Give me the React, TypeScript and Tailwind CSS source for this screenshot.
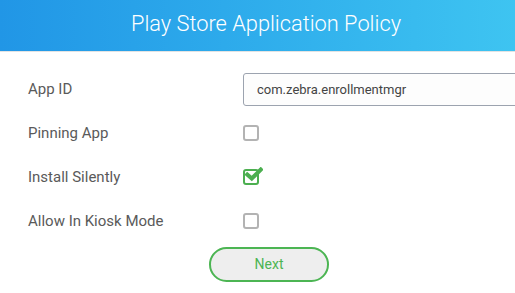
import React, { useState } from "react";

const font = { fontFamily: "Roboto, 'Liberation Sans', sans-serif" };

type CheckProps = {
  checked: boolean;
  onChange: () => void;
};

const Check: React.FC<CheckProps> = ({ checked, onChange }) => (
  <button
    type="button"
    onClick={onChange}
    className="relative h-[16px] w-[16px] cursor-pointer"
  >
    <span
      className={`block h-[16px] w-[16px] rounded-[3px] border-2 ${
        checked ? "border-[#4caf50]" : "border-[#b3b3b3]"
      }`}
    />
    {checked && (
      <svg
        viewBox="0 0 20 16"
        className="absolute left-[2px] top-[-2px] h-[15px] w-[18px]"
      >
        <path
          d="M2.5 8 L7.5 12.5 L17.5 2.5"
          fill="none"
          stroke="#4caf50"
          strokeWidth="4.5"
          strokeLinecap="square"
        />
      </svg>
    )}
  </button>
);

type RowProps = {
  label: string;
  children: React.ReactNode;
  height?: string;
};

const Row: React.FC<RowProps> = ({ label, children, height = "h-[44px]" }) => (
  <div className={`flex items-center ${height}`}>
    <span className="w-[215px] shrink-0 text-[15px] text-[#5a5a5a]">{label}</span>
    {children}
  </div>
);

export default function App() {
  const [pinning, setPinning] = useState(false);
  const [silent, setSilent] = useState(true);
  const [kiosk, setKiosk] = useState(false);

  return (
    <div className="h-[293px] w-[515px] overflow-hidden bg-white" style={font}>
      <div className="flex h-[52px] items-center justify-center border-b border-[#e3e3e3] bg-gradient-to-r from-[#2196e6] to-[#3ec4f1] pb-[2px] pl-[17px]">
        <h1 className="text-[21.8px] font-light text-white">
          Play Store Application Policy
        </h1>
      </div>
      <div className="pl-[28px]">
        <div className="mt-[21px]">
          <Row label="App ID" height="h-[33px]">
            <input
              defaultValue="com.zebra.enrollmentmgr"
              className="h-[33px] w-[300px] shrink-0 rounded-[3px] border border-[#9ca3af] bg-[#fdfdfd] px-[13px] text-[13px] text-[#444] outline-none"
            />
          </Row>
        </div>
        <div className="mt-[5px]">
          <Row label="Pinning App">
            <Check checked={pinning} onChange={() => setPinning(!pinning)} />
          </Row>
          <Row label="Install Silently">
            <Check checked={silent} onChange={() => setSilent(!silent)} />
          </Row>
          <Row label="Allow In Kiosk Mode">
            <Check checked={kiosk} onChange={() => setKiosk(!kiosk)} />
          </Row>
        </div>
      </div>
      <button
        type="button"
        className="ml-[209px] mt-[4px] h-[35px] w-[120px] rounded-full border-2 border-[#4cb553] bg-[#eeeeee] text-[14px] text-[#4cb553]"
      >
        Next
      </button>
    </div>
  );
}
